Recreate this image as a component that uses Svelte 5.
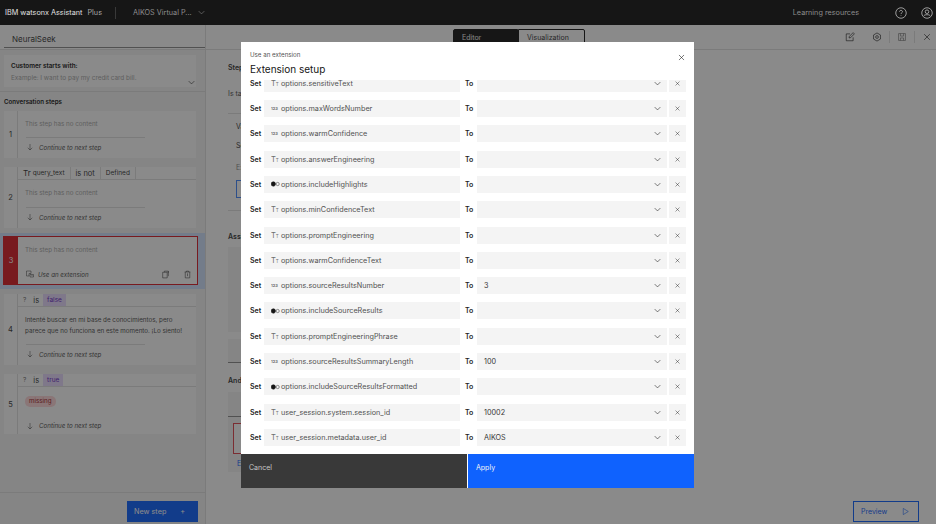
<script>
	const steps = [
		{ n: 1, text: ['This step has no content'], height: 'h47' },
		{ n: 2, cond: { icon: 'Tr', name: 'query_text', op: 'is not', value: 'Defined' }, text: ['This step has no content'], height: 'h61' },
		{ n: 3, active: true, text: ['This step has no content'] },
		{
			n: 4,
			cond: { icon: '?', op: 'is', tag: 'false' },
			text: ['Intenté buscar en mi base de conocimientos, pero', 'parece que no funciona en este momento. ¡Lo siento!'],
			height: 'h71'
		},
		{ n: 5, cond: { icon: '?', op: 'is', tag: 'true' }, missing: true, height: 'h60' }
	];

	const rows = [
		{ type: 'text', name: 'options.sensitiveText' },
		{ type: 'num', name: 'options.maxWordsNumber' },
		{ type: 'num', name: 'options.warmConfidence' },
		{ type: 'text', name: 'options.answerEngineering' },
		{ type: 'bool', name: 'options.includeHighlights' },
		{ type: 'text', name: 'options.minConfidenceText' },
		{ type: 'text', name: 'options.promptEngineering' },
		{ type: 'text', name: 'options.warmConfidenceText' },
		{ type: 'num', name: 'options.sourceResultsNumber', value: '3' },
		{ type: 'bool', name: 'options.includeSourceResults' },
		{ type: 'text', name: 'options.promptEngineeringPhrase' },
		{ type: 'num', name: 'options.sourceResultsSummaryLength', value: '100' },
		{ type: 'bool', name: 'options.includeSourceResultsFormatted' },
		{ type: 'text', name: 'user_session.system.session_id', value: '10002' },
		{ type: 'text', name: 'user_session.metadata.user_id', value: 'AIKOS' }
	];
</script>

{#snippet chevron()}
	<svg class="chev" viewBox="0 0 16 16"><path d="M3 5.500l5 5 5-5" /></svg>
{/snippet}

{#snippet close()}
	<svg class="cross" viewBox="0 0 16 16"><path d="M3.500 3.500l9 9M12.500 3.500l-9 9" /></svg>
{/snippet}

<div class="page">
	<header class="topbar">
		<div class="brand">IBM watsonx Assistant <span class="plan">Plus</span></div>
		<div class="assistant">AIKOS Virtual P... {@render chevron()}</div>
		<div class="learn">Learning resources</div>
		<svg class="top-icon" viewBox="0 0 16 16">
			<circle cx="8" cy="8" r="7" />
			<path d="M6 6.300c0-1.100.9-1.800 2-1.800s2 .7 2 1.700c0 1.500-2 1.500-2 3.200M8 11.200v.8" />
		</svg>
		<svg class="top-icon user" viewBox="0 0 16 16">
			<circle cx="8" cy="8" r="7" />
			<circle cx="8" cy="6.300" r="2.400" />
			<path d="M3.800 11.400c1.200-1.500 7.200-1.500 8.400 0" />
		</svg>
	</header>

	<div class="workspace">
		<aside class="left">
			<div class="title-bar"><div class="title">NeuralSeek</div></div>
			<div class="starts">
				<div class="starts-card">
					<strong>Customer starts with:</strong>
					<span>Example: I want to pay my credit card bill.</span>
					{@render chevron()}
				</div>
			</div>
			<div class="steps-head">Conversation steps</div>
			<div class="steps">
				{#each steps as step}
					<div class="step-wrap" class:band={step.active}>
						<div class="step {step.height ?? ''}" class:active={step.active}>
							<div class="step-num">{step.n}</div>
							<div class="step-body">
								{#if step.cond}
									<div class="cond">
										{#if step.cond.name}
											<span class="cell"><span class="tt">{step.cond.icon}</span>{step.cond.name}</span>
										{:else}
											<span class="cell mark">{step.cond.icon}</span>
										{/if}
										<span class="cell op">{step.cond.op}</span>
										{#if step.cond.tag}
											<span class="cell tag">{step.cond.tag}</span>
										{:else}
											<span class="cell">{step.cond.value}</span>
										{/if}
									</div>
								{/if}
								<div class="content">
									{#if step.missing}
										<span class="missing">missing</span>
									{:else}
										{#each step.text as line}
											<div class:muted={step.text.length === 1}>{line}</div>
										{/each}
									{/if}
								</div>
								<div class="next" class:no-line={step.missing}>
									{#if step.active}
										<svg class="ext" viewBox="0 0 16 16"><path d="M1 2h9v5H6v5H1zM8 9h7v5H8zM11 12l2-2" /></svg>
										<em>Use an extension</em>
										<svg class="act first" viewBox="0 0 16 16"><path d="M3 4h8v10H3zM6 4V2h7v9M13 2v3" /></svg>
										<svg class="act" viewBox="0 0 16 16"><path d="M3 3.500h10M6 3.500V2h4v1.500M4 3.500V14h8V3.500M8 6v5" /></svg>
									{:else}
										<svg class="arrow" viewBox="0 0 16 16"><path d="M8 2v12M3.500 9.500L8 14l4.500-4.500" /></svg>
										<em>Continue to next step</em>
									{/if}
								</div>
							</div>
						</div>
					</div>
				{/each}
			</div>
			<div class="left-foot">
				<div class="new-step">New step <span>+</span></div>
			</div>
		</aside>

		<main class="main">
			<div class="tool-bar">
				<div class="tabs">
					<div class="tab on">Editor</div>
					<div class="tab">Visualization</div>
				</div>
				<div class="tools">
					<svg class="wide" viewBox="0 0 16 16"><path d="M13 8.500V14H2V3h6M6.500 9.500l.5-2.500L13 1l2 2-6 6z" /></svg>
					<svg viewBox="0 0 16 16"><path d="M8 1.500l5.500 3.200v6.600L8 14.500l-5.500-3.200V4.700z" /><circle cx="8" cy="8" r="2.200" /></svg>
					<i></i>
					<svg class="dim" viewBox="0 0 16 16"><path d="M2.500 2.500h11v11h-11zM5.500 2.500v4h5v-4M5.500 13.500v-4h5v4" /></svg>
					<i></i>
					{@render close()}
				</div>
			</div>
			<div class="editor">
				<b>Step 3</b>
				<p class="is">Is taken</p>
				<div class="rule"></div>
				<p class="vs">Variable</p>
				<p class="vs">Set</p>
				<p class="vs small">Extension</p>
				<div class="blue-box"></div>
				<div class="rule low"></div>
				<b class="ass">Assistant says</b>
				<div class="gray-block"></div>
				<div class="link-row"></div>
				<b class="and">And then</b>
				<div class="then-block">
					<div class="then-tab"></div>
					<div class="red-box"></div>
					<span>Edit</span>
				</div>
			</div>
			<div class="preview">Preview
				<svg viewBox="0 0 16 16"><path d="M4 2.500L13 8l-9 5.500z" /></svg>
			</div>
		</main>
	</div>

	<div class="scrim"></div>

	<section class="modal">
		<div class="modal-head">
			<div>
				<div class="eyebrow">Use an extension</div>
				<h2>Extension setup</h2>
			</div>
			<button class="modal-x">{@render close()}</button>
		</div>
		<div class="rows">
			{#each rows as row}
				<div class="row">
					<b>Set</b>
					<div class="field">
						{#if row.type === 'text'}
							<span class="kind tr">T<small>T</small></span>
						{:else if row.type === 'num'}
							<span class="kind digits">123</span>
						{:else}
							<svg class="kind bool" viewBox="0 0 10 6"><circle cx="2.600" cy="3" r="2.400" class="full" /><circle cx="7.400" cy="3" r="1.800" /></svg>
						{/if}
						{row.name}
					</div>
					<b>To</b>
					<div class="field value"><span>{row.value ?? ''}</span>{@render chevron()}</div>
					<div class="field del">{@render close()}</div>
				</div>
			{/each}
		</div>
		<div class="modal-foot">
			<div class="btn cancel">Cancel</div>
			<div class="btn apply">Apply</div>
		</div>
	</section>
</div>

<style>
	:global(body) {
		margin: 0;
	}

	.page {
		position: relative;
		width: 936px;
		height: 524px;
		overflow: hidden;
		display: flex;
		flex-direction: column;
		background: #fff;
		font-family: Inter, "Liberation Sans", sans-serif;
		font-size: 7px;
		color: #161616;
	}

	.topbar {
		height: 25px;
		flex: none;
		display: flex;
		align-items: center;
		background: #161616;
		color: #e0e0e0;
		padding: 0 3px 0 5px;
		box-sizing: border-box;
		font-size: 7.250px;
		position: relative;
		z-index: 2;
	}

	.brand {
		width: 105px;
		padding-right: 5px;
		border-right: 1px solid #393939;
		line-height: 12px;
		white-space: nowrap;
	}

	.plan {
		margin-left: 3px;
		color: #a8a8a8;
	}

	.assistant {
		margin-left: 17px;
		display: flex;
		align-items: center;
		gap: 5px;
		color: #8d8d8d;
	}

	.assistant .chev {
		stroke: #8d8d8d;
	}

	.learn {
		margin-left: auto;
		margin-right: 36px;
		color: #8d8d8d;
	}

	.top-icon {
		width: 12px;
		height: 12px;
		fill: none;
		stroke: #c6c6c6;
		stroke-width: 1;
	}

	.top-icon.user {
		margin-left: 14px;
	}

	.workspace {
		flex: 1;
		display: flex;
		min-height: 0;
	}

	.left {
		width: 206px;
		flex: none;
		display: flex;
		flex-direction: column;
		background: #f4f4f4;
		border-right: 1px solid #e0e0e0;
		box-sizing: border-box;
	}

	.title-bar {
		height: 25px;
		flex: none;
		box-sizing: border-box;
		padding-left: 4px;
		background: #fff;
		border-bottom: 1px solid #e0e0e0;
	}

	.title {
		height: 22px;
		padding-left: 8px;
		line-height: 28px;
		font-size: 8px;
		border-bottom: 1px solid #8d8d8d;
		color: #393939;
	}

	.starts {
		padding: 5px 9px 4px 4px;
		border-bottom: 1px solid #e0e0e0;
	}

	.starts-card {
		position: relative;
		height: 32px;
		box-sizing: border-box;
		padding: 7px;
		background: #fff;
		display: flex;
		flex-direction: column;
		gap: 4px;
		font-size: 6.400px;
		color: #a8a8a8;
	}

	.starts-card strong {
		color: #161616;
		font-weight: 600;
	}

	.starts-card .chev {
		position: absolute;
		right: 0;
		bottom: 0;
	}

	.steps-head {
		padding: 5px 4px 5px;
		font-weight: 600;
		line-height: 9px;
		font-size: 6.200px;
	}

	.steps {
		flex: 1;
	}

	.step-wrap {
		padding: 0 9px 9px 4px;
	}

	.step-wrap.band {
		margin-top: -4px;
		margin-bottom: 5px;
		padding: 3px 7px 4px 3px;
		background: #d0e2ff;
	}

	.step {
		display: flex;
		background: #fff;
		box-sizing: border-box;
	}

	.h47 { height: 47px; }
	.h61 { height: 61px; }
	.h71 { height: 71px; }
	.h60 { height: 60px; }

	.step.active {
		height: 49px;
		border: 1px solid #da1e28;
	}

	.step-num {
		width: 13px;
		flex: none;
		display: flex;
		align-items: center;
		justify-content: center;
		border-right: 1px solid #e0e0e0;
		font-size: 7.500px;
		color: #393939;
	}

	.active .step-num {
		width: 14px;
		background: #da1e28;
		color: #fff;
		border-right: 0;
	}

	.step-body {
		flex: 1;
		display: flex;
		flex-direction: column;
		min-width: 0;
	}

	.cond {
		height: 13px;
		flex: none;
		display: flex;
		border-bottom: 1px solid #e0e0e0;
		box-sizing: border-box;
		font-size: 6.500px;
		color: #393939;
	}

	.cell {
		display: flex;
		align-items: center;
		padding: 0 5px;
		border-right: 1px solid #e0e0e0;
	}

	.cell.mark {
		padding: 0 4px 0 5px;
		border-right: 0;
		color: #6f6f6f;
	}

	.tt {
		font-size: 8px;
		margin-right: 2px;
	}

	.op {
		font-size: 7.500px;
	}

	.cell.mark + .op {
		padding: 0 3px;
		border-right: 0;
	}

	.tag {
		margin-left: 1px;
		padding: 0 4px;
		background: #e8daff;
		color: #6929c4;
		border-right: 0;
	}

	.content {
		flex: 1;
		padding: 8px 7px 0;
		font-size: 6.250px;
		line-height: 10.500px;
		color: #525252;
		white-space: nowrap;
	}

	.muted {
		color: #a8a8a8;
	}

	.missing {
		display: inline-block;
		margin-top: 1px;
		padding: 0 4px;
		border-radius: 5px;
		background: #ffd7d9;
		color: #a2191f;
	}

	.next {
		height: 21px;
		margin: 0 51px 0 8px;
		flex: none;
		display: flex;
		align-items: center;
		gap: 4px;
		border-top: 1px solid #e0e0e0;
		box-sizing: border-box;
		padding-bottom: 2px;
		font-size: 6.200px;
		color: #525252;
	}

	.next.no-line {
		border-top: 0;
		padding: 4px 0 0;
	}

	.active .next {
		margin-right: 5px;
		height: 21px;
		border-top: 0;
		padding: 1px 0 0;
	}

	.arrow, .ext, .act {
		width: 8px;
		height: 8px;
		flex: none;
		fill: none;
		stroke: #393939;
		stroke-width: 1;
	}

	.arrow {
		margin-right: 1px;
	}

	.act {
		margin-left: 9px;
		width: 9px;
		height: 9px;
	}

	.act.first {
		margin-left: auto;
	}

	.left-foot {
		border-top: 1px solid #e0e0e0;
		height: 32px;
		flex: none;
		display: flex;
		justify-content: flex-end;
		box-sizing: border-box;
		padding: 8px 7px 0 0;
	}

	.new-step {
		width: 71px;
		height: 21px;
		box-sizing: border-box;
		padding: 0 13px 0 7px;
		display: flex;
		align-items: center;
		justify-content: space-between;
		background: #0f62fe;
		color: #fff;
		font-size: 7.250px;
	}

	.main {
		flex: 1;
		display: flex;
		flex-direction: column;
		position: relative;
		min-width: 0;
	}

	.tool-bar {
		height: 25px;
		flex: none;
		display: flex;
		justify-content: flex-end;
		align-items: center;
		border-bottom: 1px solid #e0e0e0;
		box-sizing: border-box;
		padding-right: 4px;
		position: relative;
	}

	.tabs {
		position: absolute;
		left: 247px;
		top: 4px;
		display: flex;
		height: 17px;
	}

	.tab {
		width: 67px;
		border: 1px solid #161616;
		border-radius: 0 2px 0 0;
		box-sizing: border-box;
		padding: 3px 8px;
		color: #393939;
	}

	.tab.on {
		width: 65px;
		background: #161616;
		color: #f4f4f4;
		border-radius: 2px 0 0 0;
	}

	.tools {
		display: flex;
		align-items: center;
		gap: 7px;
	}

	.tools svg {
		width: 10px;
		height: 10px;
		fill: none;
		stroke: #161616;
		stroke-width: 1;
	}

	.tools .wide {
		margin-right: 10px;
	}

	.tools .dim {
		stroke: #6f6f6f;
	}

	.tools i {
		width: 1px;
		height: 12px;
		background: #e0e0e0;
	}

	.editor {
		box-sizing: border-box;
		padding: 13px 0 0 22px;
		width: 470px;
		display: flex;
		flex-direction: column;
		background: #fff;
	}

	.editor b {
		font-weight: 600;
		line-height: 9px;
		color: #393939;
	}

	.is {
		margin: 17px 0 15px;
		line-height: 9px;
		color: #525252;
	}

	.rule {
		height: 1px;
		background: #e0e0e0;
	}

	.vs {
		margin: 8px 0 2px 8px;
		line-height: 9px;
		color: #393939;
	}

	.small {
		margin-top: 11px;
		color: #8d8d8d;
	}

	.blue-box {
		height: 18px;
		margin: 6px 0 0 8px;
		border: 1px solid #4589ff;
		box-sizing: border-box;
	}

	.rule.low {
		margin-top: 12px;
	}

	.ass {
		margin-top: 21px;
	}

	.gray-block {
		height: 85px;
		margin-top: 6px;
		background: #f4f4f4;
	}

	.link-row {
		height: 24px;
		margin-top: 7px;
		background: #f4f4f4;
		border-bottom: 1px solid #8d8d8d;
		box-sizing: border-box;
	}

	.and {
		margin-top: 13px;
	}

	.then-block {
		margin-top: 7px;
		height: 80px;
		background: #f4f4f4;
		color: #0f62fe;
	}

	.then-tab {
		height: 25px;
		box-sizing: border-box;
		border-bottom: 1px solid #8d8d8d;
	}

	.red-box {
		height: 31px;
		margin: 6px 0 5px 5px;
		border: 1.500px solid #e0444f;
		box-sizing: border-box;
		background: #fff;
	}

	.then-block span {
		margin-left: 9px;
	}

	.preview {
		position: absolute;
		right: 17px;
		bottom: 2px;
		width: 66px;
		height: 21px;
		box-sizing: border-box;
		padding: 0 8px 0 7px;
		display: flex;
		align-items: center;
		justify-content: space-between;
		border: 1px solid #0f62fe;
		color: #0f62fe;
	}

	.preview svg {
		width: 9px;
		height: 9px;
		fill: none;
		stroke: #0f62fe;
		stroke-width: 1;
	}

	.scrim {
		position: absolute;
		inset: 0;
		background: rgba(22, 22, 22, 0.5);
	}

	.modal {
		position: absolute;
		left: 241px;
		top: 42px;
		width: 453px;
		height: 446px;
		display: flex;
		flex-direction: column;
		background: #fff;
	}

	.modal-head {
		height: 38px;
		flex: none;
		display: flex;
		justify-content: space-between;
		box-sizing: border-box;
		padding: 9px 7px 0 9px;
	}

	.eyebrow {
		font-size: 6.200px;
		line-height: 8px;
		color: #525252;
	}

	h2 {
		margin: 4px 0 0;
		font-size: 10px;
		line-height: 13px;
		font-weight: 400;
		color: #161616;
	}

	.modal-x {
		width: 11px;
		height: 11px;
		padding: 0;
		margin-top: -1px;
		border: 0;
		background: none;
	}

	.rows {
		flex: 1;
		min-height: 0;
		overflow: hidden;
		display: flex;
		flex-direction: column;
		justify-content: flex-end;
		gap: 8.300px;
		padding: 0 8px 8.100px 9px;
	}

	.row {
		flex: none;
		height: 17px;
		display: grid;
		grid-template-columns: 14px 196px 17px 190px 19px;
		align-items: center;
		font-size: 7.250px;
	}

	.row b {
		font-weight: 600;
		font-size: 7px;
		color: #262626;
	}

	.row b:nth-child(3) {
		padding-left: 5px;
	}

	.field {
		height: 17px;
		box-sizing: border-box;
		display: flex;
		align-items: center;
		background: #f4f4f4;
		padding-left: 7px;
		color: #525252;
		white-space: nowrap;
		font-size: 7.250px;
	}

	.kind {
		width: 9px;
		margin-right: 1px;
		flex: none;
		color: #6f6f6f;
		overflow: hidden;
	}

	.tr {
		font-size: 7.500px;
	}

	.tr small {
		font-size: 4.500px;
	}

	.digits {
		font-size: 4px;
		font-weight: 700;
	}

	.bool {
		height: 6px;
		fill: none;
		stroke: #525252;
		stroke-width: 0.7;
	}

	.bool .full {
		fill: #161616;
		stroke: #161616;
	}

	.value {
		justify-content: space-between;
		padding-right: 5px;
		color: #393939;
	}

	.del {
		justify-content: center;
		padding-left: 0;
		margin-left: 2px;
		width: 17px;
	}

	.chev, .cross {
		width: 9px;
		height: 9px;
		flex: none;
		fill: none;
		stroke: #161616;
		stroke-width: 1;
	}

	.del .cross {
		width: 7px;
		height: 7px;
	}

	.modal-foot {
		height: 34px;
		flex: none;
		display: flex;
		gap: 1px;
	}

	.btn {
		padding: 9px 8px 0;
		line-height: 9px;
		color: #f4f4f4;
		box-sizing: border-box;
	}

	.cancel {
		width: 226px;
		background: #393939;
		color: #c6c6c6;
	}

	.apply {
		flex: 1;
		background: #0f62fe;
	}
</style>
